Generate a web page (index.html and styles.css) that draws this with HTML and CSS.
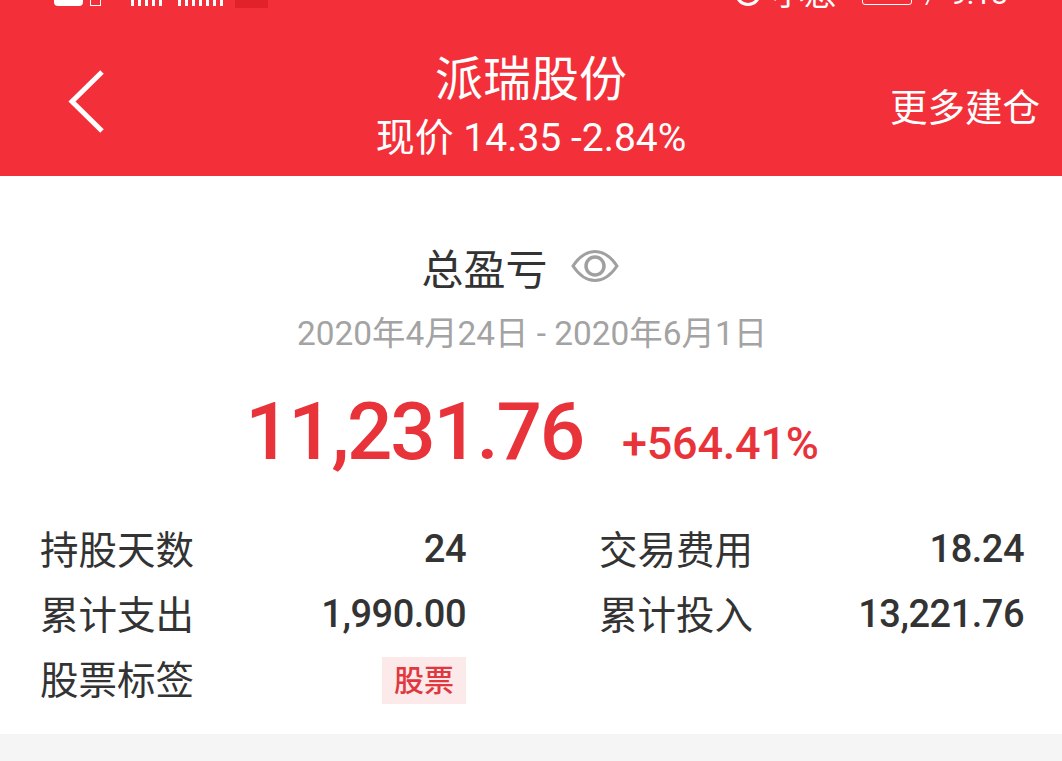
FILE: index.html
```html
<!DOCTYPE html>
<html lang="zh-CN">
<head>
  <meta charset="UTF-8" />
  <meta name="viewport" content="width=device-width, initial-scale=1" />
  <title>派瑞股份</title>
  <link rel="stylesheet" href="styles.css">
</head>
<body>
  <header class="top">
    <div class="status">
      <div class="status-left">
        <span class="pill"></span>
        <span class="box"></span>
        <span class="bars bars-a"></span>
        <span class="bars bars-b"></span>
        <span class="mosaic"></span>
      </div>
      <div class="status-right">
        <span class="ring"></span>
        <span class="status-text">小憩</span>
        <span class="battery"></span>
        <span class="slash"></span>
        <span class="status-time">9:18</span>
      </div>
    </div>
    <div class="nav">
      <svg class="back" width="38" height="64" viewBox="0 0 38 64">
        <path d="M34 3 L4 32.500 L34 62" fill="none" stroke="#fff" stroke-width="5" />
      </svg>
      <div class="nav-title">
        <div class="stock-name">派瑞股份</div>
        <div class="stock-price">现价 14.35 -2.84%</div>
      </div>
      <div class="more">更多建仓</div>
    </div>
  </header>

  <main class="summary">
    <div class="summary-head">
      <span class="summary-title">总盈亏</span>
      <svg class="eye" width="48" height="34" viewBox="0 0 48 34">
        <path d="M2 17 C8 8 15 2.500 24 2.500 C33 2.500 40 8 46 17 C40 26 33 31.500 24 31.500 C15 31.500 8 26 2 17 Z" fill="none" stroke="#a0a0a0" stroke-width="3" />
        <circle cx="24" cy="17" r="9" fill="none" stroke="#a0a0a0" stroke-width="3.500" />
      </svg>
    </div>
    <div class="dates">2020年4月24日 - 2020年6月1日</div>
    <div class="profit">
      <span class="profit-value">11,231.76</span>
      <span class="profit-rate">+564.41%</span>
    </div>

    <div class="stats">
      <div class="stat"><span class="stat-label">持股天数</span><span class="stat-value">24</span></div>
      <div class="stat"><span class="stat-label">交易费用</span><span class="stat-value">18.24</span></div>
      <div class="stat"><span class="stat-label">累计支出</span><span class="stat-value">1,990.00</span></div>
      <div class="stat"><span class="stat-label">累计投入</span><span class="stat-value">13,221.76</span></div>
      <div class="stat"><span class="stat-label">股票标签</span><span class="tag">股票</span></div>
    </div>
  </main>
  <div class="foot"></div>
</body>
</html>
```

FILE: styles.css
```css
body {
  margin: 0;
  height: 761px;
  overflow: hidden;
  background-color: #ffffff;
  color: #333333;
  font-family: Roboto, "Noto Sans CJK SC", sans-serif;
}

.top {
  height: 176px;
  background-color: #f33039;
  color: #ffffff;
}

.status {
  height: 8px;
  overflow: hidden;
  display: flex;
  justify-content: space-between;
  padding: 0 54px;
}

.status-left {
  display: flex;
  gap: 7px;
  height: 6px;
}

.pill {
  width: 29px;
  background-color: #fff;
  border-radius: 0 0 4px 4px;
}

.box {
  width: 9px;
  border: 1px solid #fff;
  border-top: none;
  margin-right: 23px;
}

.bars {
  background: repeating-linear-gradient(90deg, #fff 0 3px, transparent 3px 7px);
}

.bars-a {
  width: 32px;
  margin-right: 8px;
}

.bars-b {
  width: 47px;
  margin-right: 3px;
}

.mosaic {
  width: 33px;
  height: 8px;
  background-color: #e2222a;
}

.status-right {
  display: flex;
  align-items: flex-end;
  height: 8px;
}

.ring {
  width: 26px;
  height: 26px;
  border: 3px solid #fff;
  border-radius: 50%;
  box-sizing: border-box;
  margin-right: 11px;
  margin-bottom: 2px;
  flex: none;
}

.status-text {
  font-size: 32px;
  line-height: 22px;
  width: 78px;
  flex: none;
  margin-right: 12px;
  margin-bottom: 3px;
}

.battery {
  width: 50px;
  height: 24px;
  border: 1px solid #fff;
  border-radius: 3px;
  margin-bottom: 3px;
  flex: none;
  box-sizing: border-box;
}

.slash {
  width: 2px;
  height: 8px;
  margin: 0 21px 3px 15px;
  background-color: #fff;
  transform: skewX(-25deg);
  flex: none;
}

.status-time {
  width: 58px;
  font-size: 30px;
  line-height: 22px;
  margin-bottom: 3px;
  flex: none;
}

.nav {
  height: 168px;
  display: flex;
  align-items: flex-start;
  position: relative;
}

.back {
  position: absolute;
  left: 68px;
  top: 61px;
}

.nav-title {
  width: 100%;
  text-align: center;
  padding-top: 40px;
}

.stock-name {
  font-size: 48px;
  line-height: 63px;
}

.stock-price {
  font-size: 39px;
  line-height: 54px;
}

.more {
  position: absolute;
  right: 22px;
  top: 73px;
  font-size: 37.500px;
  line-height: 54px;
}

.summary {
  height: 558px;
  box-sizing: border-box;
  padding: 62px 38px 0 40px;
}

.summary-head {
  display: flex;
  justify-content: center;
  align-items: center;
  gap: 23px;
  height: 56px;
  padding-right: 24px;
}

.summary-title {
  font-size: 42px;
  color: #333333;
}

.dates {
  margin-top: 18px;
  text-align: center;
  font-size: 33.400px;
  line-height: 44px;
  color: #a3a3a3;
}

.profit {
  display: flex;
  justify-content: center;
  align-items: baseline;
  gap: 39px;
  margin-top: 26px;
  color: #e8333a;
  line-height: 100px;
}

.profit-value {
  font-size: 80px;
  font-weight: 500;
  letter-spacing: -2.300px;
}

.profit-rate {
  font-size: 45px;
  font-weight: 500;
  letter-spacing: -0.200px;
  margin-top: 1px;
}

.stats {
  display: grid;
  grid-template-columns: 426px 425px;
  column-gap: 133px;
  grid-auto-rows: 65px;
  margin-top: 20px;
}

.stat {
  display: flex;
  justify-content: space-between;
  align-items: center;
}

.stat-label {
  font-size: 38.500px;
}

.stat-value {
  font-size: 38px;
  font-weight: 500;
  letter-spacing: -0.500px;
  margin-top: 4px;
}

.tag {
  width: 84px;
  height: 47px;
  line-height: 47px;
  margin-top: 8px;
  text-align: center;
  font-size: 30px;
  font-weight: 500;
  color: #e0383e;
  background-color: #fce9ea;
}

.foot {
  height: 27px;
  background-color: #f5f5f5;
}
```
